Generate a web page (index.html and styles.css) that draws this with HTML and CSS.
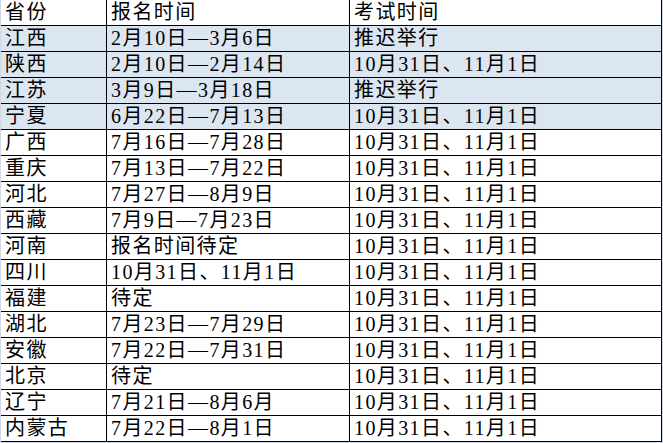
FILE: index.html
```html
<!DOCTYPE html>
<html lang="zh-CN">
<head>
<meta charset="utf-8">
<title>考试时间</title>
<link rel="stylesheet" href="styles.css">
</head>
<body>
<div class="sheet">
  <div class="row head"><div class="cell">省份</div><div class="cell">报名时间</div><div class="cell">考试时间</div></div>
  <div class="row hl"><div class="cell">江西</div><div class="cell">2月10日—3月6日</div><div class="cell">推迟举行</div></div>
  <div class="row hl"><div class="cell">陕西</div><div class="cell">2月10日—2月14日</div><div class="cell">10月31日、11月1日</div></div>
  <div class="row hl"><div class="cell">江苏</div><div class="cell">3月9日—3月18日</div><div class="cell">推迟举行</div></div>
  <div class="row hl"><div class="cell">宁夏</div><div class="cell">6月22日—7月13日</div><div class="cell">10月31日、11月1日</div></div>
  <div class="row"><div class="cell">广西</div><div class="cell">7月16日—7月28日</div><div class="cell">10月31日、11月1日</div></div>
  <div class="row"><div class="cell">重庆</div><div class="cell">7月13日—7月22日</div><div class="cell">10月31日、11月1日</div></div>
  <div class="row"><div class="cell">河北</div><div class="cell">7月27日—8月9日</div><div class="cell">10月31日、11月1日</div></div>
  <div class="row"><div class="cell">西藏</div><div class="cell">7月9日—7月23日</div><div class="cell">10月31日、11月1日</div></div>
  <div class="row"><div class="cell">河南</div><div class="cell">报名时间待定</div><div class="cell">10月31日、11月1日</div></div>
  <div class="row"><div class="cell">四川</div><div class="cell">10月31日、11月1日</div><div class="cell">10月31日、11月1日</div></div>
  <div class="row"><div class="cell">福建</div><div class="cell">待定</div><div class="cell">10月31日、11月1日</div></div>
  <div class="row"><div class="cell">湖北</div><div class="cell">7月23日—7月29日</div><div class="cell">10月31日、11月1日</div></div>
  <div class="row"><div class="cell">安徽</div><div class="cell">7月22日—7月31日</div><div class="cell">10月31日、11月1日</div></div>
  <div class="row"><div class="cell">北京</div><div class="cell">待定</div><div class="cell">10月31日、11月1日</div></div>
  <div class="row"><div class="cell">辽宁</div><div class="cell">7月21日—8月6月</div><div class="cell">10月31日、11月1日</div></div>
  <div class="row"><div class="cell">内蒙古</div><div class="cell">7月22日—8月1日</div><div class="cell">10月31日、11月1日</div></div>
</div>
</body>
</html>
```

FILE: styles.css
```css
html, body {
  margin: 0;
  padding: 0;
  background: #ffffff;
}
.sheet {
  width: 663px;
  box-sizing: border-box;
  border-left: 1px solid #d0d7e5;
  border-right: 1px solid #d0d7e5;
  border-bottom: 1px solid #d0d7e5;
}
.row {
  display: grid;
  grid-template-columns: 106px 243px 312px;
  border-bottom: 1px solid #000;
  height: 26px;
  box-sizing: border-box;
  font-family: "Liberation Serif", "Noto Sans CJK SC", serif;
  font-size: 20px;
  line-height: 25px;
  letter-spacing: 1.4px;
  color: #000;
}
.row.hl {
  background: #dce6f1;
}
.cell {
  border-right: 1px solid #000;
  padding-left: 4px;
  white-space: nowrap;
  overflow: hidden;
}
```
